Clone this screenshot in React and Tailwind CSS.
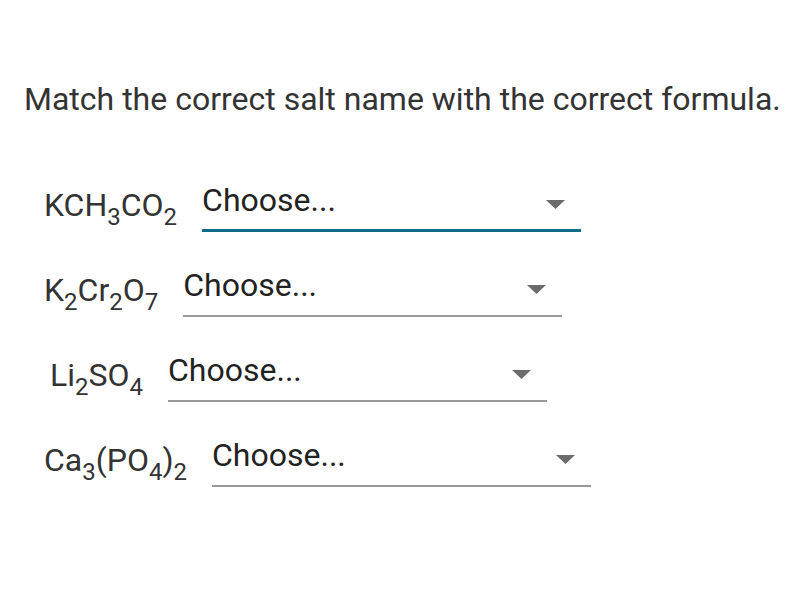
import React from 'react';

const rows = [
    { id: 1, parts: ['KCH', ['3'], 'CO', ['2']], focused: true, indent: '' },
    { id: 2, parts: ['K', ['2'], 'Cr', ['2'], 'O', ['7']], focused: false, indent: '' },
    { id: 3, parts: ['Li', ['2'], 'SO', ['4']], focused: false, indent: 'ml-[6px]' },
    { id: 4, parts: ['Ca', ['3'], '(PO', ['4'], ')', ['2']], focused: false, indent: '' },
];

function Formula({ parts }) {
    return (
        <span className="whitespace-nowrap leading-none translate-y-[5px] text-[#333]">
            {parts.map((p, i) =>
                Array.isArray(p) ? (
                    <span key={i} className="text-[0.75em] align-[-9px] leading-none">{p[0]}</span>
                ) : (
                    <span key={i}>{p}</span>
                )
            )}
        </span>
    );
}

function Select({ focused }) {
    return (
        <div
            className={
                'relative w-[379px] h-[48px] flex items-end ' +
                (focused ? 'border-b-[3px] border-[#0e6e8a] pb-[13px]' : 'border-b-2 border-[#9a9a9a] pb-[14px]')
            }
        >
            <span className="leading-none text-[#222]">Choose...</span>
            {/* dropdown arrow */}
            <svg
                className={'absolute right-[16px] ' + (focused ? 'bottom-[20px]' : 'bottom-[21px]')}
                width="19"
                height="9"
                viewBox="0 0 19 9"
            >
                <path d="M0 0 L19 0 L9.5 9 Z" fill="#6b6b6b" />
            </svg>
        </div>
    );
}

export default function App() {
    return (
        <div className="w-[805px] h-[599px] bg-white text-[#333] font-['Roboto',sans-serif] text-[32px] pt-[83px] pl-[24px]">
            <p className="leading-none">Match the correct salt name with the correct formula.</p>

            <div className="mt-[69px] flex flex-col gap-[37px] pl-[20px]">
                {rows.map((row) => (
                    <div key={row.id} className={'flex items-baseline gap-[25px] ' + row.indent}>
                        <Formula parts={row.parts} />
                        <Select focused={row.focused} />
                    </div>
                ))}
            </div>
        </div>
    );
}
